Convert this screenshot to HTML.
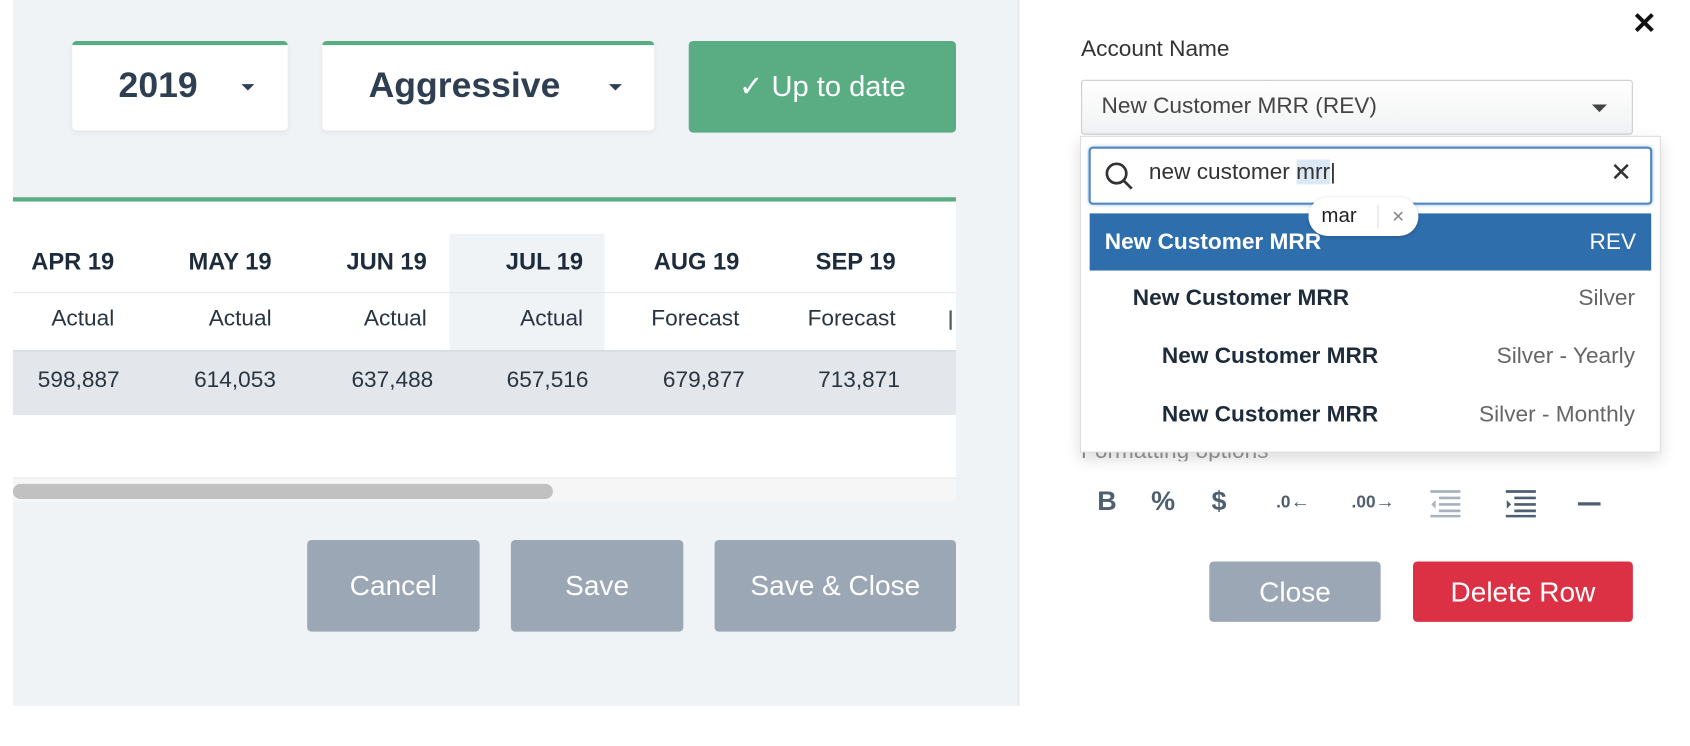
<!DOCTYPE html>
<html><head><style>
html,body{margin:0;padding:0;background:#fff;overflow:hidden;width:1690px;height:746px}
#w{position:absolute;left:0;top:0;width:1568px;height:692px;transform:scale(1.0778);transform-origin:0 0;font-family:"Liberation Sans",sans-serif}
.a{position:absolute}
.card{background:#fff;border-top:4px solid #5aad82;border-radius:4px;box-shadow:0 2px 6px rgba(0,0,0,.06);box-sizing:border-box}
.hd{font-weight:bold;font-size:22px;color:#1d2b3a;text-align:right}
.sub{font-size:21px;color:#2a3440;text-align:right}
.num{font-size:21px;color:#2a3440;text-align:right}
.btn{background:#9ba7b4;border-radius:4px;color:#fff;font-size:26px;display:flex;align-items:center;justify-content:center}
.row{position:absolute;left:1011px;width:506px;height:53px;font-size:21px;display:flex;align-items:center}
.ic{position:absolute;top:451px;color:#4d5f70;font-weight:bold;font-size:25px}
</style></head><body><div id="w">
<div class="a" style="left:12px;top:0;width:932px;height:655px;background:#f0f3f6"></div>
<div class="a" style="left:944px;top:0;width:2px;height:655px;background:#e6eaee"></div>

<div class="a card" style="left:67px;top:38px;width:200px;height:83px"></div>
<div class="a" style="left:110px;top:60px;font-size:33px;font-weight:bold;color:#2e3f52">2019</div>
<div class="a" style="left:224px;top:78px;border:6px solid transparent;border-top:6px solid #2e3f52;border-bottom:0"></div>
<div class="a card" style="left:299px;top:38px;width:308px;height:83px"></div>
<div class="a" style="left:342px;top:60px;font-size:33px;font-weight:bold;color:#2e3f52">Aggressive</div>
<div class="a" style="left:565px;top:78px;border:6px solid transparent;border-top:6px solid #2e3f52;border-bottom:0"></div>
<div class="a" style="left:639px;top:38px;width:248px;height:85px;background:#5aad82;border-radius:4px;color:#fff;font-size:27px;display:flex;align-items:center;justify-content:center">✓&nbsp;Up to date</div>

<div class="a" style="left:12px;top:183px;width:875px;height:282px;background:#fff;border-top:4px solid #5aad82;box-sizing:border-box"></div>
<div class="a" style="left:417px;top:217px;width:144px;height:108px;background:#f0f3f6"></div>
<div class="a" style="left:12px;top:271px;width:875px;height:1px;background:#e2e6ea"></div>
<div class="a" style="left:12px;top:325px;width:875px;height:60px;background:#e3e7eb;border-top:1px solid #cdd3d9;box-sizing:border-box"></div>
<div class="a" style="left:12px;top:443px;width:875px;height:22px;background:#f6f6f6;border-top:1px solid #e6e6e6;box-sizing:border-box"></div>
<div class="a" style="left:12px;top:449px;width:501px;height:14px;background:#c1c1c1;border-radius:7px"></div>

<div class="a hd" style="left:0;width:106px;top:230px">APR 19</div>
<div class="a hd" style="left:100px;width:152px;top:230px">MAY 19</div>
<div class="a hd" style="left:246px;width:150px;top:230px">JUN 19</div>
<div class="a hd" style="left:390px;width:151px;top:230px">JUL 19</div>
<div class="a hd" style="left:536px;width:150px;top:230px">AUG 19</div>
<div class="a hd" style="left:680px;width:151px;top:230px">SEP 19</div>
<div class="a sub" style="left:0;width:106px;top:284px">Actual</div>
<div class="a sub" style="left:100px;width:152px;top:284px">Actual</div>
<div class="a sub" style="left:246px;width:150px;top:284px">Actual</div>
<div class="a sub" style="left:390px;width:151px;top:284px">Actual</div>
<div class="a sub" style="left:536px;width:150px;top:284px">Forecast</div>
<div class="a sub" style="left:680px;width:151px;top:284px">Forecast</div>
<div class="a" style="left:881px;top:288px;width:2px;height:18px;background:#555"></div>
<div class="a num" style="left:0;width:111px;top:341px">598,887</div>
<div class="a num" style="left:100px;width:156px;top:341px">614,053</div>
<div class="a num" style="left:246px;width:156px;top:341px">637,488</div>
<div class="a num" style="left:390px;width:156px;top:341px">657,516</div>
<div class="a num" style="left:536px;width:155px;top:341px">679,877</div>
<div class="a num" style="left:680px;width:155px;top:341px">713,871</div>

<div class="a btn" style="left:285px;top:501px;width:160px;height:85px">Cancel</div>
<div class="a btn" style="left:474px;top:501px;width:160px;height:85px">Save</div>
<div class="a btn" style="left:663px;top:501px;width:224px;height:85px">Save &amp; Close</div>

<div class="a" style="left:1514px;top:5px;font-size:28px;font-weight:bold;color:#111">✕</div>
<div class="a" style="left:1003px;top:34px;font-size:21px;color:#333">Account Name</div>
<div class="a" style="left:1003px;top:74px;width:512px;height:51px;border:1px solid #c8ccd0;border-radius:3px;background:linear-gradient(#fff,#f1f2f3);box-sizing:border-box;font-size:21px;color:#444;padding:12px 0 0 18px">New Customer MRR (REV)</div>
<div class="a" style="left:1477px;top:97px;border:7px solid transparent;border-top:7px solid #444;border-bottom:0"></div>

<div class="a" style="left:1002px;top:126px;width:539px;height:294px;background:#fff;border:1px solid #ddd;box-shadow:0 6px 14px rgba(0,0,0,.15);box-sizing:border-box"></div>
<div class="a" style="left:1010px;top:136px;width:523px;height:54px;border:2px solid #4f87c2;border-radius:4px;box-sizing:border-box;box-shadow:0 0 3px #9cc0e4"></div>
<svg class="a" style="left:1022px;top:148px" width="34" height="32"><circle cx="14" cy="13" r="9" fill="none" stroke="#333" stroke-width="2.5"/><path d="M21 20l7 7" stroke="#333" stroke-width="2.5"/></svg>
<div class="a" style="left:1066px;top:148px;font-size:21px;color:#333">new customer <span style="background:#dde8f5">mrr</span>|</div>
<div class="a" style="left:1494px;top:146px;font-size:24px;color:#333">✕</div>
<div class="row" style="top:198px;background:#2f6ead;color:#fff;justify-content:space-between;padding:0 14px;box-sizing:border-box;width:521px"><b>New Customer MRR</b><span>REV</span></div>
<div class="a" style="left:1214px;top:183px;width:102px;height:36px;background:#fff;border-radius:18px;box-shadow:0 1px 4px rgba(0,0,0,.2);font-size:19px;color:#222;display:flex;align-items:center"><span style="padding-left:12px;width:52px;border-right:1px solid #ddd">mar</span><span style="color:#888;padding-left:12px;font-size:15px">✕</span></div>
<div class="row" style="top:250px;justify-content:space-between;padding:0 0 0 40px;box-sizing:border-box;color:#1d2b3a"><b>New Customer MRR</b><span style="color:#666">Silver</span></div>
<div class="row" style="top:304px;justify-content:space-between;padding:0 0 0 67px;box-sizing:border-box;color:#1d2b3a"><b>New Customer MRR</b><span style="color:#666">Silver - Yearly</span></div>
<div class="row" style="top:358px;justify-content:space-between;padding:0 0 0 67px;box-sizing:border-box;color:#1d2b3a"><b>New Customer MRR</b><span style="color:#666">Silver - Monthly</span></div>
<div class="a" style="left:1003px;top:420px;width:240px;height:8px;overflow:hidden"><div style="margin-top:-13px;font-size:21px;color:#888">Formatting options</div></div>

<div class="ic" style="left:1018px">B</div>
<div class="ic" style="left:1068px">%</div>
<div class="ic" style="left:1124px">$</div>
<div class="ic" style="left:1184px;font-size:16px;top:455px">.0<span style="font-size:18px">←</span></div>
<div class="ic" style="left:1254px;font-size:16px;top:455px">.00<span style="font-size:18px">→</span></div>
<svg class="a" style="left:1327px;top:454px" width="30" height="26"><g stroke="#a8b2bc" stroke-width="2.5"><path d="M0 2h28M8 8h20M8 14h20M8 20h20M0 25h28"/></g><path d="M5 10v8l-4-4z" fill="#a8b2bc"/></svg>
<svg class="a" style="left:1397px;top:454px" width="30" height="26"><g stroke="#4d5f70" stroke-width="2.5"><path d="M0 2h28M8 8h20M8 14h20M8 20h20M0 25h28"/></g><path d="M1 10v8l4-4z" fill="#4d5f70"/></svg>
<div class="a" style="left:1464px;top:466px;width:21px;height:3px;background:#4d5f70"></div>

<div class="a btn" style="left:1122px;top:521px;width:159px;height:56px">Close</div>
<div class="a btn" style="left:1311px;top:521px;width:204px;height:56px;background:#dc3145">Delete Row</div>
</div></body></html>
